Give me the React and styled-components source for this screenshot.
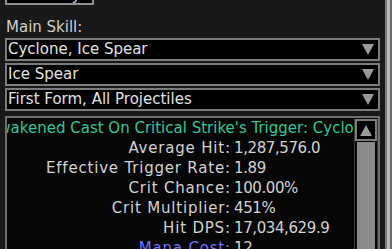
import React from "react";
import styled, { createGlobalStyle } from "styled-components";

const Global = createGlobalStyle`
  html, body {
    margin: 0;
    padding: 0;
    background: #191919;
    overflow: hidden;
  }
  body {
    font-family: "DejaVu Sans", sans-serif;
    font-size: 15px;
    color: #d2d2d2;
  }
`;

const skills = ["Cyclone, Ice Spear", "Ice Spear", "First Form, All Projectiles"];

const stats = [
  { label: "Average Hit", value: "1,287,576.0" },
  { label: "Effective Trigger Rate", value: "1.89" },
  { label: "Crit Chance", value: "100.00%" },
  { label: "Crit Multiplier", value: "451%" },
  { label: "Hit DPS", value: "17,034,629.9" },
  { label: "Mana Cost", value: "12", mana: true },
];

const App = () => {
  return (
    <Page>
      <Global />
      <Main>
        <TabButton>Party</TabButton>
        <Label>Main Skill:</Label>
        <DropList>
          {skills.map((s) => (
            <Dropdown key={s}>
              <span>{s}</span>
              <Arrow />
            </Dropdown>
          ))}
        </DropList>
        <Output>
          <Lines>
            <Heading>
              <span>Awakened Cast On Critical Strike's Trigger: Cyclone</span>
            </Heading>
            {stats.map((st) => (
              <StatRow key={st.label}>
                <StatLabel $mana={st.mana}>{st.label}:</StatLabel>
                <StatValue>{st.value}</StatValue>
              </StatRow>
            ))}
          </Lines>
          <ScrollBar>
            <ScrollUp>
              <UpArrow />
            </ScrollUp>
            <Thumb />
          </ScrollBar>
        </Output>
      </Main>
      <Divider />
    </Page>
  );
};

const Page = styled.div`
  display: flex;
  width: 392px;
  height: 249px;
  overflow: hidden;
`;

const Main = styled.div`
  width: 375px;
  padding-left: 5px;
  display: flex;
  flex-direction: column;
`;

const TabButton = styled.div`
  width: 89px;
  height: 20px;
  margin-top: -15px;
  box-sizing: border-box;
  border: 2px solid #8f8f8f;
  background: #000;
  color: #d2d2d2;
  line-height: 16px;
  text-align: center;
  padding-left: 24px;
`;

const Label = styled.div`
  margin-top: 12px;
  height: 20px;
  line-height: 20px;
  padding-left: 1px;
  color: #cfcfcf;
`;

const DropList = styled.div`
  margin-top: 1px;
  display: flex;
  flex-direction: column;
  gap: 2px;
`;

const Dropdown = styled.div`
  height: 23px;
  box-sizing: border-box;
  border: 2px solid #7c7c7c;
  background: #000;
  display: flex;
  align-items: center;
  justify-content: space-between;
  padding: 0 4px 0 1px;
  line-height: 19px;
  color: #e2e2e2;
`;

const Arrow = styled.div`
  width: 0;
  height: 0;
  border-left: 6px solid transparent;
  border-right: 6px solid transparent;
  border-top: 11px solid #9a9a9a;
`;

const Output = styled.div`
  margin-top: 5px;
  flex: 1;
  box-sizing: border-box;
  border: 2px solid #6e6e6e;
  border-bottom: none;
  background: #070707;
  display: flex;
`;

const Lines = styled.div`
  width: 350px;
  overflow: hidden;
  line-height: 20px;
`;

const Heading = styled.div`
  display: flex;
  justify-content: center;
  white-space: nowrap;
  overflow: hidden;
  color: #35c597;
`;

const StatRow = styled.div`
  display: grid;
  grid-template-columns: 223px 1fr;
  white-space: nowrap;
`;

const StatLabel = styled.span`
  text-align: right;
  letter-spacing: 0.8px;
  margin-right: -0.8px;
  color: ${(p) => (p.$mana ? "#7272ff" : "#d2d2d2")};
`;

const StatValue = styled.span`
  padding-left: 4px;
  letter-spacing: -0.4px;
`;

const ScrollBar = styled.div`
  width: 22px;
  margin-top: 1px;
  display: flex;
  flex-direction: column;
  gap: 1px;
  border-left: 1px solid #3a3a3a;
  border-right: 1px solid #3a3a3a;
`;

const ScrollUp = styled.div`
  height: 22px;
  box-sizing: border-box;
  border: 2px solid #7c7c7c;
  background: #000;
  display: flex;
  align-items: center;
  justify-content: center;
`;

const UpArrow = styled.div`
  width: 0;
  height: 0;
  border-left: 6px solid transparent;
  border-right: 6px solid transparent;
  border-bottom: 11px solid #9a9a9a;
`;

const Thumb = styled.div`
  flex: 1;
  margin: 0 2px;
  background: #8a8a8a;
`;

const Divider = styled.div`
  margin-left: 5px;
  width: 7px;
  background: linear-gradient(
    to right,
    #7a7a7a 0,
    #7a7a7a 2px,
    #b8b8b8 2px,
    #b8b8b8 5px,
    #6a6a6a 5px
  );
`;

export default App;
